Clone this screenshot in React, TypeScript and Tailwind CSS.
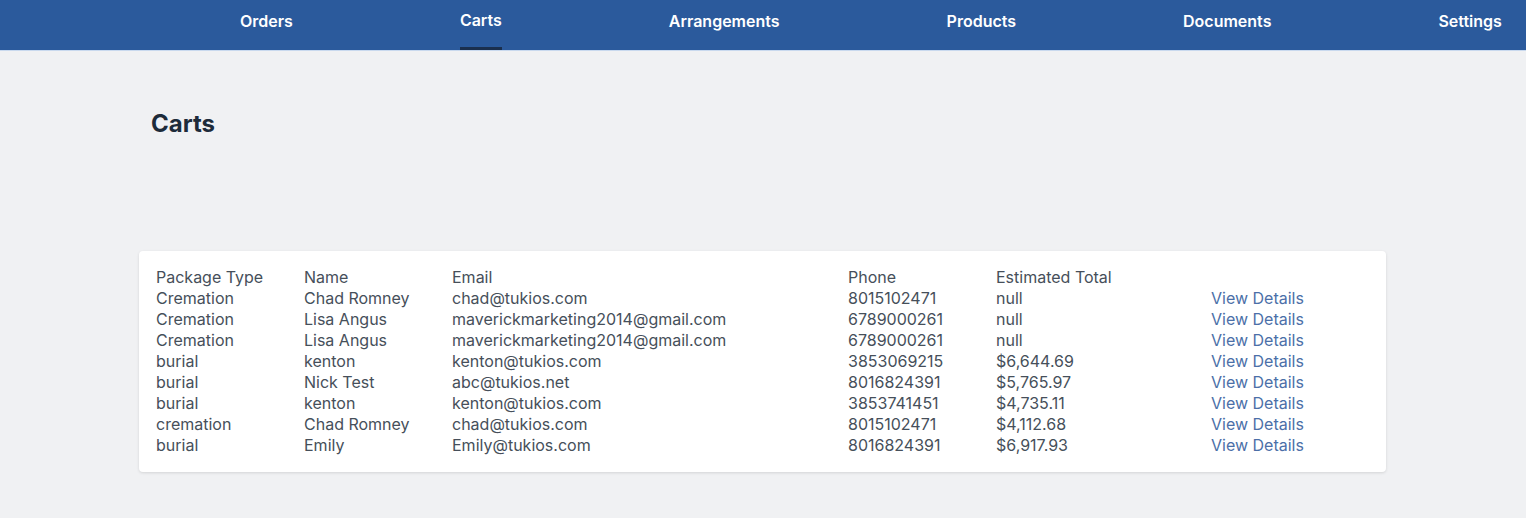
const navItems = ['Orders', 'Carts', 'Arrangements', 'Products', 'Documents', 'Settings'];

const carts = [
  { type: 'Cremation', name: 'Chad Romney', email: 'chad@tukios.com', phone: '8015102471', total: 'null' },
  { type: 'Cremation', name: 'Lisa Angus', email: 'maverickmarketing2014@gmail.com', phone: '6789000261', total: 'null' },
  { type: 'Cremation', name: 'Lisa Angus', email: 'maverickmarketing2014@gmail.com', phone: '6789000261', total: 'null' },
  { type: 'burial', name: 'kenton', email: 'kenton@tukios.com', phone: '3853069215', total: '$6,644.69' },
  { type: 'burial', name: 'Nick Test', email: 'abc@tukios.net', phone: '8016824391', total: '$5,765.97' },
  { type: 'burial', name: 'kenton', email: 'kenton@tukios.com', phone: '3853741451', total: '$4,735.11' },
  { type: 'cremation', name: 'Chad Romney', email: 'chad@tukios.com', phone: '8015102471', total: '$4,112.68' },
  { type: 'burial', name: 'Emily', email: 'Emily@tukios.com', phone: '8016824391', total: '$6,917.93' },
];

function Header() {
  return (
    <header className="h-[51px] bg-[#2b5a9c] border-b border-[#c9d9ee]">
      <nav className="flex h-full items-stretch gap-[167px] pl-[240px]">
        {navItems.map((item) => (
          <a
            key={item}
            className={
              'relative flex h-full items-center text-[16px] font-semibold text-white ' +
              (item === 'Carts' ? 'pb-[10px]' : 'pb-[8px]')
            }
          >
            {item}
            {item === 'Carts' && (
              <span className="absolute bottom-0 left-0 right-0 h-[3px] bg-[#1a2f4e]" />
            )}
          </a>
        ))}
      </nav>
    </header>
  );
}

export default function App() {
  return (
    <div className="min-h-[518px] bg-[#f0f1f3] font-['Inter',_'Liberation_Sans',_sans-serif]">
      <Header />
      <main className="px-[139px]">
        <h1 className="pl-[12px] pt-[59px] text-[24px] font-bold leading-[28px] text-[#1d2b3a]">Carts</h1>
        <div className="mt-[113px] w-[1247px] rounded-[4px] bg-white px-[17px] pb-[16px] pt-[16px] shadow-[0_1px_3px_rgba(0,0,0,0.12)]">
          <table className="border-collapse text-left text-[16px] leading-[21px] text-[#464f5a]">
            <thead>
              <tr>
                <th className="w-[148px] p-0 font-normal">Package Type</th>
                <th className="w-[148px] p-0 font-normal">Name</th>
                <th className="w-[396px] p-0 font-normal">Email</th>
                <th className="w-[148px] p-0 font-normal">Phone</th>
                <th className="w-[215px] p-0 font-normal">Estimated Total</th>
                <th className="p-0 font-normal"></th>
              </tr>
            </thead>
            <tbody>
              {carts.map((c, i) => (
                <tr key={i}>
                  <td className="p-0">{c.type}</td>
                  <td className="p-0">{c.name}</td>
                  <td className="p-0">{c.email}</td>
                  <td className="p-0">{c.phone}</td>
                  <td className="p-0">{c.total}</td>
                  <td className="p-0">
                    <a className="text-[#4b6fa8]">View Details</a>
                  </td>
                </tr>
              ))}
            </tbody>
          </table>
        </div>
      </main>
    </div>
  );
}
